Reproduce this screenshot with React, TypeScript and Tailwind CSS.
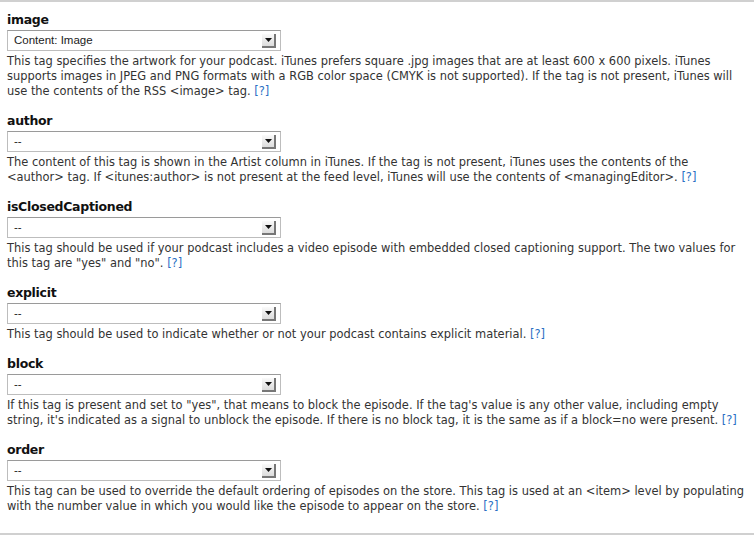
import React from "react";

type Section = { label: string; value: string; lines: string[] };

const sections: Section[] = [
  {
    label: "image",
    value: "Content: Image",
    lines: [
      "This tag specifies the artwork for your podcast. iTunes prefers square .jpg images that are at least 600 x 600 pixels. iTunes",
      "supports images in JPEG and PNG formats with a RGB color space (CMYK is not supported). If the tag is not present, iTunes will",
      "use the contents of the RSS <image> tag.",
    ],
  },
  {
    label: "author",
    value: "--",
    lines: [
      "The content of this tag is shown in the Artist column in iTunes. If the tag is not present, iTunes uses the contents of the",
      "<author> tag. If <itunes:author> is not present at the feed level, iTunes will use the contents of <managingEditor>.",
    ],
  },
  {
    label: "isClosedCaptioned",
    value: "--",
    lines: [
      "This tag should be used if your podcast includes a video episode with embedded closed captioning support. The two values for",
      'this tag are "yes" and "no".',
    ],
  },
  {
    label: "explicit",
    value: "--",
    lines: ["This tag should be used to indicate whether or not your podcast contains explicit material."],
  },
  {
    label: "block",
    value: "--",
    lines: [
      'If this tag is present and set to "yes", that means to block the episode. If the tag\'s value is any other value, including empty',
      "string, it's indicated as a signal to unblock the episode. If there is no block tag, it is the same as if a block=no were present.",
    ],
  },
  {
    label: "order",
    value: "--",
    lines: [
      "This tag can be used to override the default ordering of episodes on the store. This tag is used at an <item> level by populating",
      "with the number value in which you would like the episode to appear on the store.",
    ],
  },
];

function SelectBox({ value }: { value: string }) {
  return (
    <div className="relative flex h-[21px] w-[274px] items-center border border-[#bdbdbd] border-t-[#9a9a9a] bg-white pl-[6px]">
      <span className="text-[11.5px] leading-none text-[#222]" style={{ fontFamily: '"Liberation Sans", Arial, sans-serif' }}>
        {value}
      </span>
      <div className="absolute right-[4px] top-[3px] flex h-[14px] w-[14px] items-center justify-center border-r-2 border-b-2 border-r-[#777] border-b-[#777] bg-gradient-to-b from-[#fafafa] to-[#dcdcdc]">
        <svg width="7" height="4" viewBox="0 0 7 4">
          <path d="M0 0 L7 0 L3.5 4 Z" fill="#111" />
        </svg>
      </div>
    </div>
  );
}

export default function App() {
  return (
    <div
      className="h-[537px] w-[754px] overflow-hidden bg-white"
      style={{ fontFamily: '"DejaVu Sans", Verdana, sans-serif' }}
    >
      <div className="border-t-2 border-b-2 border-[#d0d0d0] px-[7px] pt-[10px] pb-[19px]">
        {sections.map((s, i) => (
          <div key={i} className="mb-[14px] last:mb-0">
            <div className="h-[16px] text-[12.5px] font-bold leading-[16px] tracking-[-0.3px] text-[#111]">{s.label}</div>
            <div className="mt-[2px]">
              <SelectBox value={s.value} />
            </div>
            <div className="mt-[3px] text-[11.45px] leading-[15px] text-[#333]">
              {s.lines.map((l, j) => (
                <div key={j} className="whitespace-nowrap">
                  {l}
                  {j === s.lines.length - 1 && (
                    <>
                      {" "}
                      <span className="text-[#2a6fc4]">[?]</span>
                    </>
                  )}
                </div>
              ))}
            </div>
          </div>
        ))}
      </div>
    </div>
  );
}
